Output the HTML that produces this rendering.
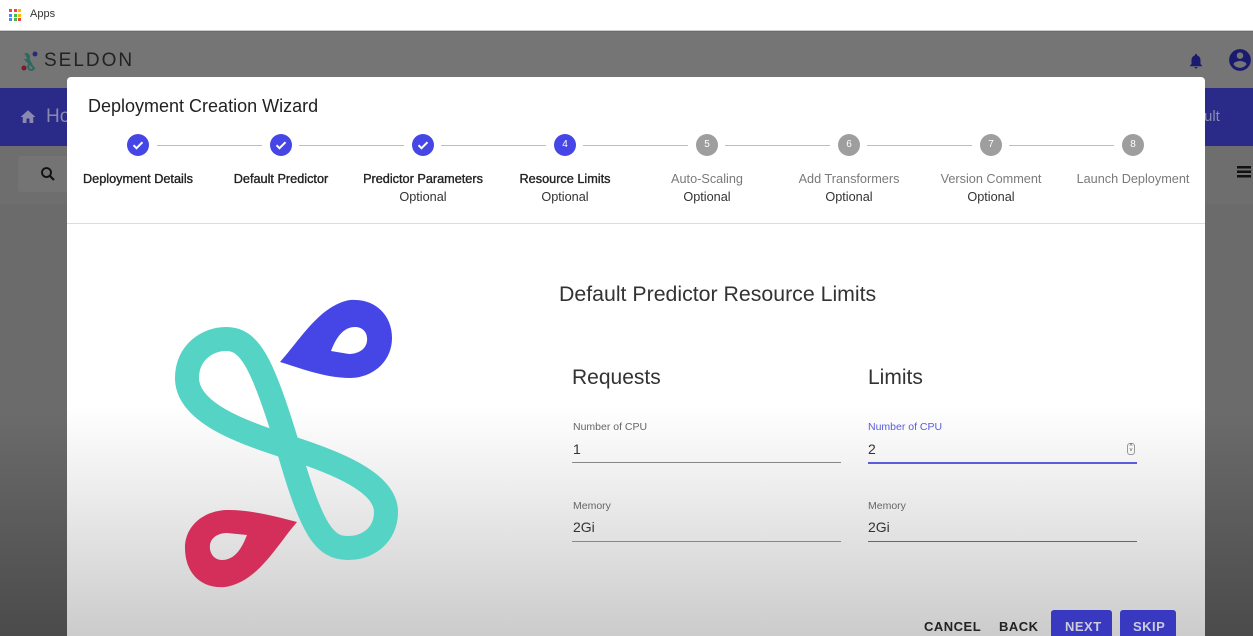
<!DOCTYPE html>
<html><head><meta charset="utf-8"><style>
*{margin:0;padding:0;box-sizing:border-box}
html,body{width:1253px;height:636px;overflow:hidden}
body{position:relative;font-family:"Liberation Sans",Roboto,sans-serif;background:#6b6b6b}
.abs{position:absolute}
.step{position:absolute;top:170px;width:170px;margin-left:-85px;text-align:center;font-size:12.7px;line-height:18px;color:#7a7a7a}
.step.d{color:#222;-webkit-text-stroke:.35px #222}
.step.d .o{-webkit-text-stroke:0}
.step .o{color:#333}
.circ{position:absolute;top:134px;width:22px;height:22px;margin-left:-11px;border-radius:50%;background:#9e9e9e;color:#fff;font-size:10px;text-align:center;line-height:22px}
.circ.b{background:#4646e6}
.line{position:absolute;top:145px;height:1px;background:#bdbdbd}
.lbl{position:absolute;font-size:10.5px;color:#666}
.val{position:absolute;font-size:14px;color:#333}
.ul{position:absolute;height:1px;background:#888}
.btn{position:absolute;font-size:13px;font-weight:bold;letter-spacing:.5px}
</style></head><body>
<div class="abs" style="left:0;top:0;width:1253px;height:31px;background:#fff;border-bottom:1px solid #ccc">
 <div class="abs" style="left:9px;top:9px;width:12px;height:12px;display:grid;grid-template-columns:repeat(3,3px);gap:1.5px">
  <i style="background:#e44"></i><i style="background:#e44"></i><i style="background:#fb0"></i><i style="background:#48f"></i><i style="background:#4b4"></i><i style="background:#fb0"></i><i style="background:#48f"></i><i style="background:#4b4"></i><i style="background:#e44"></i></div>
 <div class="abs" style="left:30px;top:8px;font-size:11px;color:#333">Apps</div>
</div>
<div class="abs" style="left:0;top:32px;width:1253px;height:56px;background:#757575"></div>
<div class="abs" style="left:44px;top:50px;font-size:19px;letter-spacing:2px;color:#222">SELDON</div>
<svg class="abs" style="left:20px;top:50px" width="20" height="22" viewBox="0 0 20 22"><path d="M6 4a3 3 0 1 1 0 6l8 8a3 3 0 1 1-3-4z" fill="none" stroke="#2a6a60" stroke-width="2"/><circle cx="15" cy="4" r="2.5" fill="#2a2a7a"/><circle cx="4" cy="18" r="2.5" fill="#7a1a30"/></svg>
<svg class="abs" style="left:1187px;top:51px" width="18" height="20" viewBox="0 0 24 24"><path fill="#1a1a70" d="M12 22c1.1 0 2-.9 2-2h-4c0 1.1.9 2 2 2zm6-6v-5c0-3.1-1.6-5.6-4.5-6.3V4c0-.8-.7-1.5-1.5-1.5s-1.5.7-1.5 1.5v.7C7.6 5.4 6 7.9 6 11v5l-2 2v1h16v-1l-2-2z"/></svg>
<svg class="abs" style="left:1227px;top:47px" width="26" height="26" viewBox="0 0 24 24"><path fill="#1a1a70" d="M12 2C6.5 2 2 6.5 2 12s4.5 10 10 10 10-4.5 10-10S17.5 2 12 2zm0 3c1.7 0 3 1.3 3 3s-1.3 3-3 3-3-1.3-3-3 1.3-3 3-3zm0 14.2c-2.5 0-4.7-1.3-6-3.2 0-2 4-3.1 6-3.1s6 1.1 6 3.1c-1.3 1.9-3.5 3.2-6 3.2z"/></svg>
<div class="abs" style="left:0;top:88px;width:1253px;height:58px;background:#2a2a88"></div>
<svg class="abs" style="left:19px;top:108px" width="18" height="18" viewBox="0 0 24 24"><path fill="#8a8ab0" d="M10 20v-6h4v6h5v-8h3L12 3 2 12h3v8z"/></svg>
<div class="abs" style="left:46px;top:106px;font-size:19px;color:#8a8ab0">Ho</div>
<div class="abs" style="left:1204px;top:108px;font-size:15px;color:#8a8ab0">ult</div>
<div class="abs" style="left:0;top:146px;width:1253px;height:58px;background:#6e6e6e"></div>
<div class="abs" style="left:18px;top:156px;width:60px;height:36px;background:#747474;border-radius:3px"></div>
<svg class="abs" style="left:39px;top:165px" width="18" height="18" viewBox="0 0 24 24"><circle cx="10" cy="10" r="6" fill="none" stroke="#111" stroke-width="2.5"/><path d="M14.5 14.5L20 20" stroke="#111" stroke-width="2.8"/></svg>
<div class="abs" style="left:1237px;top:166px;width:14px;height:12px;background:repeating-linear-gradient(#111 0 2.5px,transparent 2.5px 4.5px)"></div>

<div class="abs" style="left:67px;top:77px;width:1138px;height:570px;background:linear-gradient(#fff 0,#fff 330px,#e2e2e2 460px,#c9c9c9 570px);border-radius:4px"></div>
<div class="abs" style="left:88px;top:96px;font-size:18px;color:#222">Deployment Creation Wizard</div>

<div class="line" style="left:157px;width:105px"></div>
<div class="line" style="left:299px;width:105px"></div>
<div class="line" style="left:441px;width:105px"></div>
<div class="line" style="left:583px;width:105px"></div>
<div class="line" style="left:725px;width:105px"></div>
<div class="line" style="left:867px;width:105px"></div>
<div class="line" style="left:1009px;width:105px"></div>

<div class="circ b" style="left:138px"><svg width="22" height="22" viewBox="0 0 22 22"><path d="M6.5 11.2l3 3 6-6" fill="none" stroke="#fff" stroke-width="2"/></svg></div>
<div class="circ b" style="left:281px"><svg width="22" height="22" viewBox="0 0 22 22"><path d="M6.5 11.2l3 3 6-6" fill="none" stroke="#fff" stroke-width="2"/></svg></div>
<div class="circ b" style="left:423px"><svg width="22" height="22" viewBox="0 0 22 22"><path d="M6.5 11.2l3 3 6-6" fill="none" stroke="#fff" stroke-width="2"/></svg></div>
<div class="circ b" style="left:565px">4</div>
<div class="circ" style="left:707px">5</div>
<div class="circ" style="left:849px">6</div>
<div class="circ" style="left:991px">7</div>
<div class="circ" style="left:1133px">8</div>

<div class="step d" style="left:138px">Deployment Details</div>
<div class="step d" style="left:281px">Default Predictor</div>
<div class="step d" style="left:423px">Predictor Parameters<br><span class="o">Optional</span></div>
<div class="step d" style="left:565px">Resource Limits<br><span class="o">Optional</span></div>
<div class="step" style="left:707px">Auto-Scaling<br><span class="o">Optional</span></div>
<div class="step" style="left:849px">Add Transformers<br><span class="o">Optional</span></div>
<div class="step" style="left:991px">Version Comment<br><span class="o">Optional</span></div>
<div class="step" style="left:1133px">Launch Deployment</div>
<div class="abs" style="left:67px;top:223px;width:1138px;height:1px;background:#ddd"></div>

<svg class="abs" style="left:0;top:0" width="600" height="636">
<path d="M288,447 C240,432 187,412 187,378 C187,352 208,339 226,339 C250,339 262,362 288,447 C312,532 325,548 348,548 C368,548 386,535 386,512 C386,482 335,462 288,447Z" fill="none" stroke="#55d3c4" stroke-width="24" stroke-linejoin="round"/>
<path fill-rule="evenodd" fill="#4646e6" d="M280,362 C300,340 320,305 350,300 C375,298 392,315 392,338 C392,362 372,378 350,378 C325,378 300,368 280,362Z M331,351 C336,338 343,327 355,327 C363,327 368,333 367,341 C366,350 357,354 349,354Z"/>
<path fill-rule="evenodd" fill="#d42e5a" d="M297,522 C277,545 258,582 225,587 C200,589 185,572 185,548 C185,525 205,510 228,510 C253,510 278,517 297,522Z M247,535 C242,548 235,560 222,560 C214,560 209,553 210,545 C211,537 219,533 227,533Z"/>
</svg>

<div class="abs" style="left:559px;top:282px;font-size:21.3px;color:#333">Default Predictor Resource Limits</div>
<div class="abs" style="left:572px;top:366px;font-size:21px;color:#333">Requests</div>
<div class="abs" style="left:868px;top:366px;font-size:21px;color:#333">Limits</div>
<div class="lbl" style="left:573px;top:421px">Number of CPU</div>
<div class="val" style="left:573px;top:441px">1</div>
<div class="ul" style="left:572px;top:462px;width:269px"></div>
<div class="lbl" style="left:868px;top:421px;color:#5b5bdc">Number of CPU</div>
<div class="val" style="left:868px;top:441px">2</div>
<div class="abs" style="left:1127px;top:443px;width:8px;height:12px;border:1px solid #999;border-radius:3px;font-size:6px;line-height:5px;text-align:center;color:#555">˄<br>˅</div>
<div class="abs" style="left:868px;top:462px;width:269px;height:2px;background:#5b5bdc"></div>
<div class="lbl" style="left:573px;top:500px">Memory</div>
<div class="val" style="left:573px;top:519px">2Gi</div>
<div class="ul" style="left:572px;top:541px;width:269px"></div>
<div class="lbl" style="left:868px;top:500px">Memory</div>
<div class="val" style="left:868px;top:519px">2Gi</div>
<div class="ul" style="left:868px;top:541px;width:269px;background:#666"></div>

<div class="btn" style="left:924px;top:619px;color:#222">CANCEL</div>
<div class="btn" style="left:999px;top:619px;color:#222">BACK</div>
<div class="abs" style="left:1051px;top:610px;width:61px;height:30px;background:#3838c0;border-radius:3px"></div>
<div class="btn" style="left:1065px;top:619px;color:#ccd">NEXT</div>
<div class="abs" style="left:1120px;top:610px;width:56px;height:30px;background:#3838c0;border-radius:3px"></div>
<div class="btn" style="left:1133px;top:619px;color:#ccd">SKIP</div>

<div class="abs" style="left:0;top:32px;width:67px;height:604px;background:linear-gradient(transparent 380px,rgba(0,0,0,.3))"></div>
<div class="abs" style="left:1205px;top:32px;width:48px;height:604px;background:linear-gradient(transparent 380px,rgba(0,0,0,.3))"></div>
</body></html>
